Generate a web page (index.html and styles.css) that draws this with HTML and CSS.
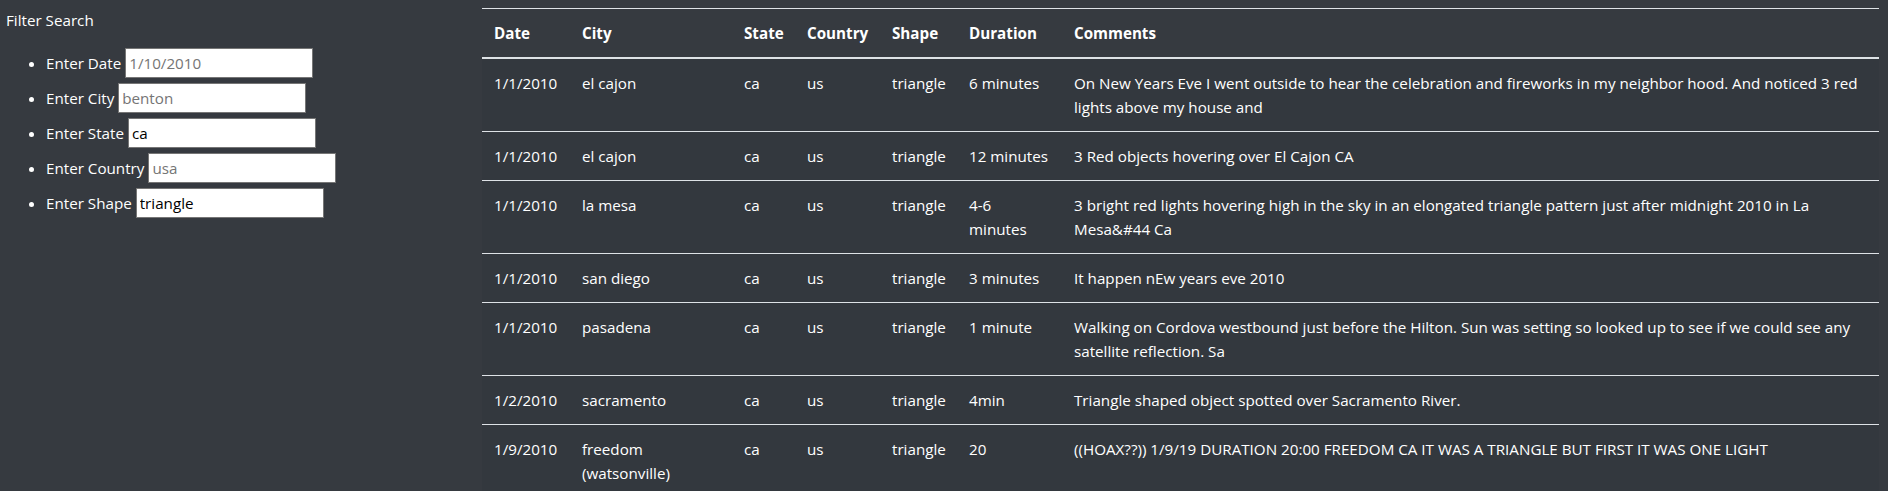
FILE: index.html
```html
<!DOCTYPE html>
<html lang="en">
<head>
<meta charset="utf-8">
<title>UFO Sightings</title>
<link rel="stylesheet" href="styles.css">
</head>
<body>
<div class="page">
  <aside class="filters">
    <div class="filters-title">Filter Search</div>
    <ul class="filter-list">
      <li><label for="datetime">Enter Date</label> <input id="datetime" class="filter-input" type="text" placeholder="1/10/2010"></li>
      <li><label for="city">Enter City</label> <input id="city" class="filter-input" type="text" placeholder="benton"></li>
      <li><label for="state">Enter State</label> <input id="state" class="filter-input" type="text" value="ca"></li>
      <li><label for="country">Enter Country</label> <input id="country" class="filter-input" type="text" placeholder="usa"></li>
      <li><label for="shape">Enter Shape</label> <input id="shape" class="filter-input" type="text" value="triangle"></li>
    </ul>
  </aside>
  <main class="results">
    <table class="ufo-table">
      <colgroup>
        <col class="c-date"><col class="c-city"><col class="c-state"><col class="c-country"><col class="c-shape"><col class="c-duration"><col class="c-comments">
      </colgroup>
      <thead>
        <tr><th>Date</th><th>City</th><th>State</th><th>Country</th><th>Shape</th><th>Duration</th><th>Comments</th></tr>
      </thead>
      <tbody>
        <tr><td>1/1/2010</td><td>el cajon</td><td>ca</td><td>us</td><td>triangle</td><td>6 minutes</td><td>On New Years Eve I went outside to hear the celebration and fireworks in my neighbor hood. And noticed 3 red lights above my house and</td></tr>
        <tr><td>1/1/2010</td><td>el cajon</td><td>ca</td><td>us</td><td>triangle</td><td>12 minutes</td><td>3 Red objects hovering over El Cajon CA</td></tr>
        <tr><td>1/1/2010</td><td>la mesa</td><td>ca</td><td>us</td><td>triangle</td><td>4-6 minutes</td><td>3 bright red lights hovering high in the sky in an elongated triangle pattern just after midnight 2010 in La Mesa&amp;#44 Ca</td></tr>
        <tr><td>1/1/2010</td><td>san diego</td><td>ca</td><td>us</td><td>triangle</td><td>3 minutes</td><td>It happen nEw years eve 2010</td></tr>
        <tr><td>1/1/2010</td><td>pasadena</td><td>ca</td><td>us</td><td>triangle</td><td>1 minute</td><td>Walking on Cordova westbound just before the Hilton. Sun was setting so looked up to see if we could see any satellite reflection. Sa</td></tr>
        <tr><td>1/2/2010</td><td>sacramento</td><td>ca</td><td>us</td><td>triangle</td><td>4min</td><td>Triangle shaped object spotted over Sacramento River.</td></tr>
        <tr><td>1/9/2010</td><td>freedom (watsonville)</td><td>ca</td><td>us</td><td>triangle</td><td>20</td><td>((HOAX??)) 1/9/19 DURATION 20:00 FREEDOM CA IT WAS A TRIANGLE BUT FIRST IT WAS ONE LIGHT</td></tr>
      </tbody>
    </table>
  </main>
</div>
</body>
</html>
```

FILE: styles.css
```css
html, body {
  margin: 0;
  padding: 0;
}

body {
  background: #363a40;
  color: #ffffff;
  font-family: "Open Sans", "Noto Sans", Lato, Arial, sans-serif;
  font-size: 15.2px;
  line-height: 24px;
}

.page {
  display: flex;
  align-items: flex-start;
}

.filters {
  width: 482px;
  box-sizing: border-box;
  padding: 8px 0 0 6px;
}

.filters-title {
  line-height: 24px;
}

.filter-list {
  margin: 16px 0 0;
  padding-left: 40px;
}

.filter-list li {
  line-height: 24px;
  margin-bottom: 5px;
}

.filter-input {
  box-sizing: border-box;
  width: 188px;
  height: 30px;
  padding: 2px 3px;
  border: 1px solid #767676;
  border-radius: 0;
  background: #ffffff;
  color: #000000;
  font: inherit;
  line-height: 24px;
  vertical-align: baseline;
}

.filter-input::placeholder {
  color: #757575;
}

.results {
  width: 1397px;
  padding-top: 8px;
}

.ufo-table {
  width: 1397px;
  table-layout: fixed;
  border-collapse: collapse;
  color: #ffffff;
}

.ufo-table tbody {
  background: #33383e;
}

.c-date { width: 88px; }
.c-city { width: 162px; }
.c-state { width: 63px; }
.c-country { width: 85px; }
.c-shape { width: 77px; }
.c-duration { width: 105px; }
.c-comments { width: 817px; }

.ufo-table th,
.ufo-table td {
  padding: 12px;
  text-align: left;
  vertical-align: top;
  border-top: 1px solid #dee2e6;
  line-height: 24px;
}

.ufo-table th {
  font-weight: 700;
  border-bottom: 2px solid #dee2e6;
}
```
